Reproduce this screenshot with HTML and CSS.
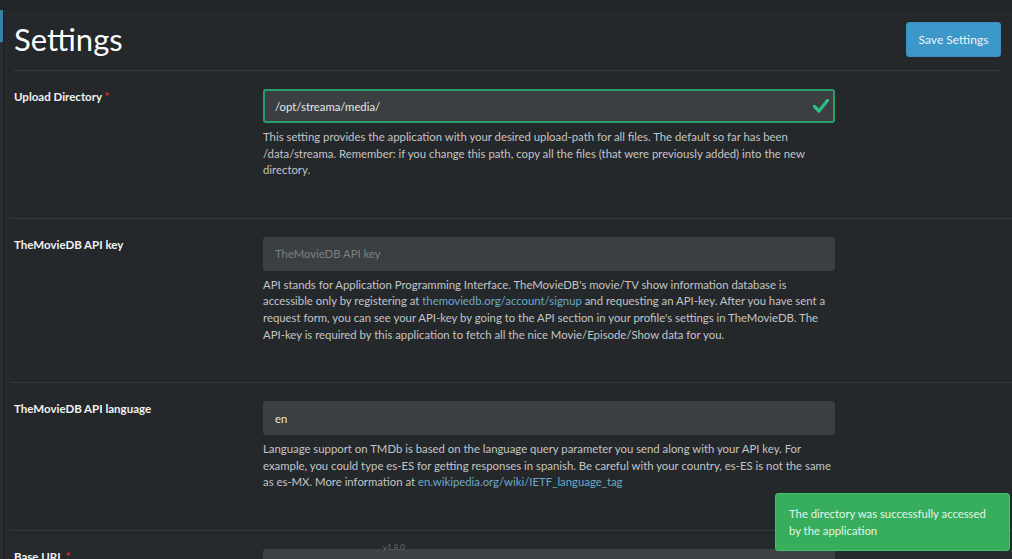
FILE: index.html
```html
<!DOCTYPE html>
<html lang="en">
<head>
<meta charset="utf-8">
<title>Settings</title>
<link rel="stylesheet" href="styles.css">
</head>
<body>
<div class="topstrip"></div>
<div class="layout">
  <aside class="sidebar"><div class="sidebar-active"></div></aside>
  <main class="main">
    <header class="page-header">
      <h1 class="page-title">Settings</h1>
      <button class="btn-save" type="button">Save Settings</button>
    </header>

    <section class="setting-row">
      <label class="setting-label">Upload Directory <span class="req">*</span></label>
      <div class="setting-control">
        <div class="input-wrap">
          <input class="field field-valid" type="text" value="/opt/streama/media/">
          <svg class="check" width="18" height="16" viewBox="0 0 18 16"><path d="M2.5 8.5 L7 13 L15.5 2.5" fill="none" stroke="#2fbf80" stroke-width="3.2" stroke-linecap="round" stroke-linejoin="round"/></svg>
        </div>
        <p class="help">This setting provides the application with your desired upload-path for all files. The default so far has been /data/streama. Remember: if you change this path, copy all the files (that were previously added) into the new directory.</p>
      </div>
    </section>

    <section class="setting-row">
      <label class="setting-label">TheMovieDB API key</label>
      <div class="setting-control">
        <input class="field" type="text" placeholder="TheMovieDB API key">
        <p class="help">API stands for Application Programming Interface. TheMovieDB's movie/TV show information database is accessible only by registering at <a class="link" href="#">themoviedb.org/account/signup</a> and requesting an API-key. After you have sent a request form, you can see your API-key by going to the API section in your profile's settings in TheMovieDB. The API-key is required by this application to fetch all the nice Movie/Episode/Show data for you.</p>
      </div>
    </section>

    <section class="setting-row">
      <label class="setting-label">TheMovieDB API language</label>
      <div class="setting-control">
        <input class="field" type="text" value="en">
        <p class="help">Language support on TMDb is based on the language query parameter you send along with your API key. For example, you could type es-ES for getting responses in spanish. Be careful with your country, es-ES is not the same as es-MX. More information at <a class="link" href="#">en.wikipedia.org/wiki/IETF_language_tag</a></p>
      </div>
    </section>

    <section class="setting-row">
      <label class="setting-label">Base URL <span class="req">*</span></label>
      <div class="setting-control">
        <input class="field" type="text">
      </div>
    </section>
  </main>
</div>
<footer class="footer"><span class="version">v1.8.0</span></footer>
<div class="toast">The directory was successfully accessed by the application</div>
</body>
</html>
```
FILE: styles.css
```css
html, body {
  margin: 0;
  padding: 0;
  height: 100%;
  overflow: hidden;
}
body {
  background: #25282b;
  font-family: Lato, "Open Sans", Arial, sans-serif;
  color: #e6e6e6;
}
.topstrip {
  height: 10px;
  background: #222528;
}
.layout {
  display: flex;
}
.sidebar {
  width: 3px;
  flex: none;
  border-right: 1px solid #1c1e21;
  background: #2a2d31;
  min-height: 600px;
}
.sidebar-active {
  height: 32px;
  background: #3a7fa6;
}
.main {
  flex: 1;
  padding-left: 6px;
}
.page-header {
  display: flex;
  align-items: center;
  justify-content: space-between;
  height: 60px;
  margin: 0 12px 0 4px;
  border-bottom: 1px solid #383b3f;
}
.page-title {
  margin: 0;
  font-size: 31px;
  font-weight: 400;
  color: #ffffff;
  line-height: 1;
  position: relative;
  top: -1px;
}
.btn-save {
  font-family: inherit;
  font-size: 12px;
  color: #eef6fb;
  background: #3d97c9;
  border: 1px solid #3a8ec0;
  border-radius: 3px;
  width: 95px;
  height: 35px;
  padding: 0;
  margin: 0 -1px 2px 0;
}
.setting-row {
  display: grid;
  grid-template-columns: 249px 572px;
  padding: 18px 0 39px 4px;
  border-bottom: 1px solid #35383c;
}
.setting-label {
  font-size: 11.5px;
  font-weight: 700;
  color: #f2f2f2;
  line-height: 16px;
}
.req {
  color: #e0262e;
}
.setting-control {
  display: flex;
  flex-direction: column;
}
.input-wrap {
  position: relative;
}
.field {
  display: block;
  box-sizing: border-box;
  width: 100%;
  height: 34px;
  margin: 0;
  padding: 0 11px;
  font-family: inherit;
  font-size: 11.3px;
  color: #e8e8e8;
  background: #3c3f42;
  border: 1px solid #3c3f42;
  border-radius: 3px;
  outline: none;
}
.field::placeholder {
  color: #7c7f82;
}
.field-valid {
  border: 2px solid #2a9c6c;
  padding-left: 10px;
}
.check {
  position: absolute;
  right: 5px;
  top: 9px;
}
.help {
  margin: 6px 0 0;
  font-size: 11.35px;
  line-height: 16.6px;
  color: #c3c4c5;
}
.link {
  color: #6aa9c9;
  text-decoration: none;
}
.footer {
  position: fixed;
  left: 0;
  right: 0;
  bottom: 0;
  height: 24px;
  background: rgba(255, 255, 255, 0.012);
}
.version {
  position: absolute;
  left: 383px;
  top: 7px;
  font-size: 8px;
  color: #6b6e71;
}
.toast {
  position: fixed;
  right: 2px;
  top: 493px;
  box-sizing: border-box;
  width: 235px;
  height: 58px;
  padding: 11px 14px 0 13px;
  font-size: 11.3px;
  line-height: 17px;
  color: #e3f4e7;
  background: #37ae5e;
  border: 1px solid #45c06e;
  border-radius: 3px;
}
```
